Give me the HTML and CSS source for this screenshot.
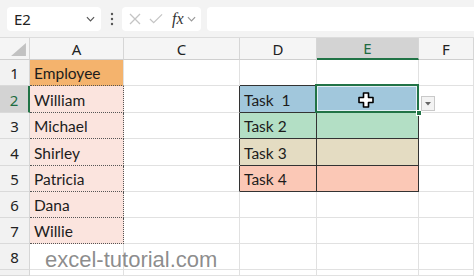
FILE: index.html
```html
<!DOCTYPE html>
<html lang="en">
<head>
    <meta charset="UTF-8">
    <title>Task colors</title>
    <link rel="stylesheet" href="styles.css">
</head>
<body>
    <div class="toolbar">
        <div class="namebox">
            <span>E2</span>
            <svg class="chev" viewBox="0 0 10 6"><polyline points="1,1 5,5 9,1"/></svg>
        </div>
        <div class="grip">
            <svg viewBox="0 0 4 14"><circle cx="2" cy="2" r="1.2"/><circle cx="2" cy="7" r="1.2"/><circle cx="2" cy="12" r="1.2"/></svg>
        </div>
        <div class="fxbox">
            <svg class="ico" viewBox="0 0 12 12"><path d="M1 1L11 11M11 1L1 11"/></svg>
            <svg class="ico" viewBox="0 0 15 12"><path d="M1 6L5 10L14 1"/></svg>
            <span class="fx">fx</span>
            <svg class="chev light" viewBox="0 0 10 6"><polyline points="1,1 5,5 9,1"/></svg>
        </div>
        <div class="formula"></div>
    </div>

    <div class="sheet">
        <!-- column headers -->
        <div class="hd corner">
            <svg viewBox="0 0 16 14"><polygon points="16,0 16,14 0,14"/></svg>
        </div>
        <div class="hd">A</div>
        <div class="hd">C</div>
        <div class="hd">D</div>
        <div class="hd hl">E</div>
        <div class="hd">F</div>

        <!-- row 1 -->
        <div class="rh">1</div>
        <div class="c emp-head">Employee</div>
        <div class="c"></div>
        <div class="c top-edge"></div>
        <div class="c top-edge"></div>
        <div class="c"></div>

        <!-- row 2 -->
        <div class="rh active">2</div>
        <div class="c emp">William</div>
        <div class="c left-edge"></div>
        <div class="c task t1">Task&nbsp;&nbsp;1</div>
        <div class="c task t1 selected">
            <div class="sel"></div>
            <div class="handle"></div>
            <svg class="cursor" viewBox="0 0 16 16"><polygon points="5.5,1 10.5,1 10.5,5.5 15,5.5 15,10.5 10.5,10.5 10.5,15 5.5,15 5.5,10.5 1,10.5 1,5.5 5.5,5.5"/></svg>
            <div class="dropbtn"><svg viewBox="0 0 6 4"><polygon points="0,0 6,0 3,3.5"/></svg></div>
        </div>
        <div class="c"></div>

        <!-- row 3 -->
        <div class="rh">3</div>
        <div class="c emp">Michael</div>
        <div class="c left-edge"></div>
        <div class="c task t2">Task 2</div>
        <div class="c task t2"></div>
        <div class="c"></div>

        <!-- row 4 -->
        <div class="rh">4</div>
        <div class="c emp">Shirley</div>
        <div class="c left-edge"></div>
        <div class="c task t3">Task 3</div>
        <div class="c task t3"></div>
        <div class="c"></div>

        <!-- row 5 -->
        <div class="rh">5</div>
        <div class="c emp">Patricia</div>
        <div class="c left-edge"></div>
        <div class="c task t4">Task 4</div>
        <div class="c task t4"></div>
        <div class="c"></div>

        <!-- row 6 -->
        <div class="rh">6</div>
        <div class="c emp">Dana</div>
        <div class="c"></div>
        <div class="c"></div>
        <div class="c"></div>
        <div class="c"></div>

        <!-- row 7 -->
        <div class="rh">7</div>
        <div class="c emp">Willie</div>
        <div class="c"></div>
        <div class="c"></div>
        <div class="c"></div>
        <div class="c"></div>

        <!-- row 8 -->
        <div class="rh">8</div>
        <div class="c"></div>
        <div class="c"></div>
        <div class="c"></div>
        <div class="c"></div>
        <div class="c"></div>

        <!-- row 9, cut off -->
        <div class="rh"></div>
        <div class="c"></div>
        <div class="c"></div>
        <div class="c"></div>
        <div class="c"></div>
        <div class="c"></div>
    </div>

    <div class="watermark">excel-tutorial.com</div>
</body>
</html>
```

FILE: styles.css
```css
* {
    margin: 0;
    padding: 0;
    box-sizing: border-box;
}

html, body {
    width: 474px;
    height: 276px;
    overflow: hidden;
    background: #fff;
}

body {
    position: relative;
    font-family: "Noto Sans", sans-serif;
}

/* formula bar */
.toolbar {
    height: 38px;
    background: #f3f3f3;
    border-bottom: 1px solid #dcdcdc;
    display: flex;
    align-items: flex-start;
    padding: 7px 0 0 7px;
}
.namebox {
    width: 94px;
    height: 24px;
    background: #fff;
    border-radius: 4px;
    display: flex;
    align-items: center;
    justify-content: space-between;
    padding: 0 6px 0 7px;
    font-size: 15px;
    color: #222;
}
.chev {
    width: 9px;
    height: 6px;
    fill: none;
    stroke: #555;
    stroke-width: 1.3;
}
.chev.light {
    stroke: #999;
}
.grip {
    width: 21px;
    height: 24px;
    display: flex;
    align-items: center;
    justify-content: center;
}
.grip svg {
    width: 4px;
    height: 14px;
    fill: #555;
}
.fxbox {
    width: 79px;
    height: 24px;
    background: #fff;
    border-radius: 4px;
    display: flex;
    align-items: center;
    gap: 7px;
    padding-left: 6px;
}
.ico {
    height: 12px;
    width: 14px;
    fill: none;
    stroke: #c4c4c4;
    stroke-width: 1.3;
}
.fx {
    font-family: "Liberation Serif", serif;
    font-style: italic;
    font-size: 16px;
    color: #333;
    margin-left: 2px;
    margin-right: -4px;
}
.formula {
    flex: 1;
    height: 24px;
    background: #fff;
    border-radius: 4px 0 0 4px;
    margin-left: 6px;
}

/* grid */
.sheet {
    display: grid;
    grid-template-columns: 30px 94px 116px 77px 102px 1fr;
    grid-template-rows: 22px 26px 27px 26px 27px 26px 26px 26px 26px 1fr;
    height: 238px;
}

.hd {
    background: #f5f5f5;
    border-right: 1px solid #d6d6d6;
    border-bottom: 1px solid #cfcfcf;
    display: flex;
    align-items: center;
    justify-content: center;
    font-size: 15px;
    color: #222;
}
.hd.hl {
    background: #d3d3d3;
    color: #1e6b41;
    border-bottom: 2px solid #217346;
}
.corner {
    justify-content: flex-end;
    align-items: flex-end;
    padding: 0 3px 3px 0;
}
.corner svg {
    width: 15px;
    height: 13px;
    fill: #c2c2c2;
}

.rh {
    background: #f2f2f2;
    border-right: 1px solid #d6d6d6;
    border-bottom: 1px solid #dadada;
    display: flex;
    align-items: center;
    justify-content: center;
    font-size: 15px;
    color: #222;
    padding-top: 1px;
}
.rh.active {
    background: #d3d3d3;
    color: #1e6b41;
    border-right: 2px solid #217346;
}

.c {
    border-right: 1px solid #e1e1e1;
    border-bottom: 1px solid #e1e1e1;
    font-family: Lato, "Noto Sans", sans-serif;
    font-size: 15.5px;
    line-height: 1;
    color: #1c1c1c;
    display: flex;
    align-items: flex-end;
    padding: 0 0 4px 4px;
    white-space: nowrap;
}

/* employee column */
.emp-head {
    background: #f4b36d;
    border-bottom: 1px dotted #555;
}
.emp {
    background: #fbe4de;
    border-right: 1px dotted #555;
    border-bottom: 1px dotted #555;
}

/* task table */
.top-edge {
    border-bottom: 1px solid #333;
}
.left-edge {
    border-right: 1px solid #333;
}
.task {
    border-right: 1px solid #333;
    border-bottom: 1px solid #333;
}
.t1 { background: #a1c7dc; }
.t2 { background: #b3dfc5; }
.t3 { background: #e4dcc2; }
.t4 { background: #fbc8b6; }

/* active cell */
.selected {
    position: relative;
}
.sel {
    position: absolute;
    top: -2px;
    left: -2px;
    right: -1px;
    bottom: -1px;
    border: 2px solid #217346;
    box-shadow: inset 0 0 0 1px rgba(255,255,255,0.7);
}
.handle {
    position: absolute;
    right: -4px;
    bottom: -4px;
    width: 6px;
    height: 6px;
    background: #217346;
    border: 1px solid #fff;
}
.cursor {
    position: absolute;
    left: 41px;
    top: 6px;
    width: 16px;
    height: 16px;
    fill: #fff;
    stroke: #000;
    stroke-width: 1.6;
    stroke-linejoin: round;
}
.dropbtn {
    position: absolute;
    left: calc(100% + 3px);
    top: 10px;
    width: 14px;
    height: 15px;
    background: #f3f3f3;
    border: 1px solid #c9c9c9;
    display: flex;
    align-items: center;
    justify-content: center;
}
.dropbtn svg {
    width: 6px;
    height: 4px;
    fill: #666;
}

.watermark {
    position: absolute;
    left: 45px;
    top: 249px;
    font-family: "Liberation Sans", Arial, sans-serif;
    font-size: 22px;
    line-height: 1;
    color: rgba(120,120,120,0.85);
}
```
